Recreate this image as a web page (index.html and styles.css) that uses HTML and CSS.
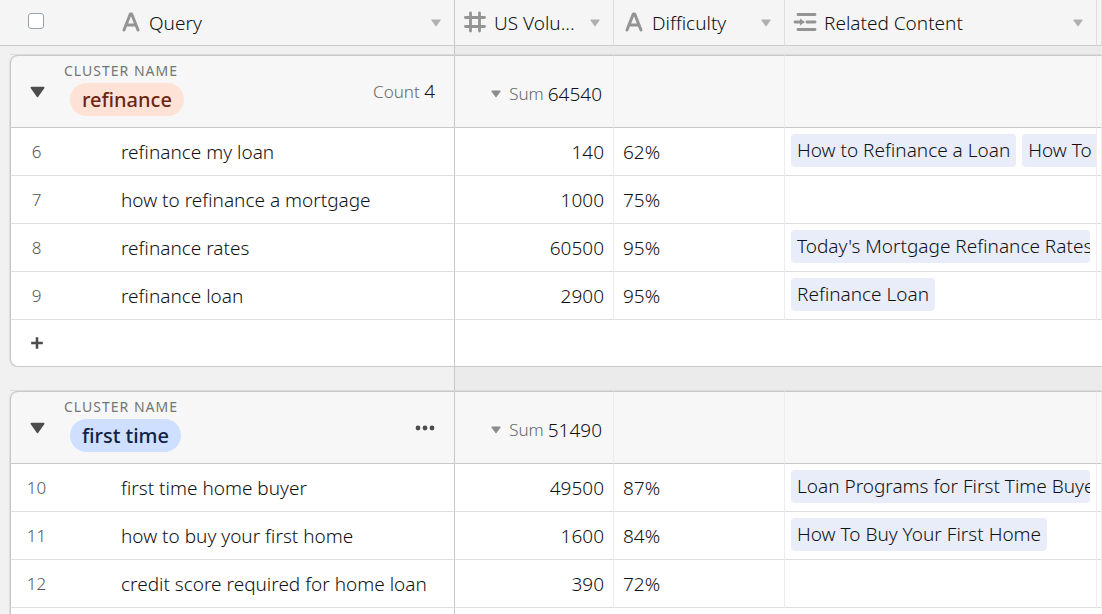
FILE: index.html
```
<!DOCTYPE html>
<html lang="en">
<head>
    <meta charset="UTF-8">
    <meta name="viewport" content="width=device-width, initial-scale=1.0">
    <title>Keyword Clusters</title>
    <link rel="stylesheet" href="styles.css">
</head>
<body>
    <!-- shared icons -->
    <svg class="defs" width="0" height="0" aria-hidden="true">
        <symbol id="caret" viewBox="0 0 10 8">
            <path d="M1 .5h8a.6.6 0 0 1 .5 1L5.5 7.100a.6.6 0 0 1-1 0L.5 1.500A.6.6 0 0 1 1 .5z" fill="currentColor"/>
        </symbol>
        <symbol id="text-field" viewBox="0 0 18 20">
            <path d="M2 18 8.300 2h1.400L16 18M4.500 13h9" fill="none" stroke="currentColor" stroke-width="3" stroke-linecap="round" stroke-linejoin="round"/>
        </symbol>
        <symbol id="number-field" viewBox="0 0 22 22">
            <path d="M1.500 6.500h19M1.500 15.500h19M6.500 2v18M15.500 2v18" fill="none" stroke="currentColor" stroke-width="2.800" stroke-linecap="round"/>
        </symbol>
        <symbol id="link-field" viewBox="0 0 24 20">
            <path d="M5 2.500h17M14 10h8M5 17.500h17M2 10h6" fill="none" stroke="currentColor" stroke-width="2.800" stroke-linecap="round"/>
            <path d="M7 6.500 12 10l-5 3.500z" fill="currentColor"/>
        </symbol>
    </svg>

    <div class="grid-view">
        <table class="grid">
            <colgroup>
                <col class="col-gutter">
                <col class="col-num">
                <col class="col-query">
                <col class="col-volume">
                <col class="col-difficulty">
                <col class="col-related">
                <col class="col-next">
            </colgroup>
            <thead>
                <tr>
                    <th colspan="2" class="select-all"><input type="checkbox" aria-label="Select all rows"></th>
                    <th class="frozen">
                        <div class="field field-query">
                            <svg class="icon-text"><use href="#text-field"/></svg>
                            <span class="field-name">Query</span>
                            <button class="menu" aria-label="Query menu"><svg><use href="#caret"/></svg></button>
                        </div>
                    </th>
                    <th>
                        <div class="field">
                            <svg class="icon-number"><use href="#number-field"/></svg>
                            <span class="field-name">US Volu...</span>
                            <button class="menu" aria-label="US Volume menu"><svg><use href="#caret"/></svg></button>
                        </div>
                    </th>
                    <th>
                        <div class="field field-difficulty">
                            <svg class="icon-text"><use href="#text-field"/></svg>
                            <span class="field-name">Difficulty</span>
                            <button class="menu" aria-label="Difficulty menu"><svg><use href="#caret"/></svg></button>
                        </div>
                    </th>
                    <th>
                        <div class="field field-related">
                            <svg class="icon-link"><use href="#link-field"/></svg>
                            <span class="field-name">Related Content</span>
                            <button class="menu" aria-label="Related Content menu"><svg><use href="#caret"/></svg></button>
                        </div>
                    </th>
                    <th></th>
                </tr>
            </thead>

            <tbody>
                <tr class="gap gap-top"><td class="gutter"></td><td colspan="2" class="frozen"></td><td colspan="4" class="gap-main"></td></tr>
                <tr class="group">
                    <td class="gutter"></td>
                    <td colspan="2" class="first frozen">
                        <div class="group-head">
                            <button class="toggle" aria-label="Collapse refinance"><svg><use href="#caret"/></svg></button>
                            <div class="group-title">
                                <span class="group-label">CLUSTER NAME</span>
                                <span class="pill pill-red">refinance</span>
                            </div>
                            <span class="count">Count <b>4</b></span>
                        </div>
                    </td>
                    <td>
                        <button class="summary"><svg><use href="#caret"/></svg>Sum <b>64540</b></button>
                    </td>
                    <td></td>
                    <td></td>
                    <td></td>
                </tr>
                <tr class="row">
                    <td class="gutter"></td>
                    <td class="first num">6</td>
                    <td class="query frozen">refinance my loan</td>
                    <td class="volume">140</td>
                    <td class="difficulty">62%</td>
                    <td><div class="links"><span class="link">How to Refinance a Loan</span><span class="link cut">How To</span></div></td>
                    <td></td>
                </tr>
                <tr class="row">
                    <td class="gutter"></td>
                    <td class="first num">7</td>
                    <td class="query frozen">how to refinance a mortgage</td>
                    <td class="volume">1000</td>
                    <td class="difficulty">75%</td>
                    <td></td>
                    <td></td>
                </tr>
                <tr class="row">
                    <td class="gutter"></td>
                    <td class="first num">8</td>
                    <td class="query frozen">refinance rates</td>
                    <td class="volume">60500</td>
                    <td class="difficulty">95%</td>
                    <td><div class="links"><span class="link">Today's Mortgage Refinance Rates</span></div></td>
                    <td></td>
                </tr>
                <tr class="row">
                    <td class="gutter"></td>
                    <td class="first num">9</td>
                    <td class="query frozen">refinance loan</td>
                    <td class="volume">2900</td>
                    <td class="difficulty">95%</td>
                    <td><div class="links"><span class="link">Refinance Loan</span></div></td>
                    <td></td>
                </tr>
                <tr class="add-row">
                    <td class="gutter"></td>
                    <td class="first"><button class="add" aria-label="Add row"><svg viewBox="0 0 12 12"><path d="M6 1v10M1 6h10" stroke="currentColor" stroke-width="2.200"/></svg></button></td>
                    <td class="frozen"></td>
                    <td colspan="4"></td>
                </tr>
            </tbody>

            <tbody>
                <tr class="gap"><td class="gutter"></td><td colspan="2" class="frozen"></td><td colspan="4" class="gap-main"></td></tr>
                <tr class="group">
                    <td class="gutter"></td>
                    <td colspan="2" class="first frozen">
                        <div class="group-head">
                            <button class="toggle" aria-label="Collapse first time"><svg><use href="#caret"/></svg></button>
                            <div class="group-title">
                                <span class="group-label">CLUSTER NAME</span>
                                <span class="pill pill-blue">first time</span>
                            </div>
                            <button class="more" aria-label="Group options"><svg viewBox="0 0 20 6"><circle cx="3" cy="3" r="2.400"/><circle cx="10" cy="3" r="2.400"/><circle cx="17" cy="3" r="2.400"/></svg></button>
                        </div>
                    </td>
                    <td>
                        <button class="summary"><svg><use href="#caret"/></svg>Sum <b>51490</b></button>
                    </td>
                    <td></td>
                    <td></td>
                    <td></td>
                </tr>
                <tr class="row">
                    <td class="gutter"></td>
                    <td class="first num">10</td>
                    <td class="query frozen">first time home buyer</td>
                    <td class="volume">49500</td>
                    <td class="difficulty">87%</td>
                    <td><div class="links"><span class="link">Loan Programs for First Time Buyers</span></div></td>
                    <td></td>
                </tr>
                <tr class="row">
                    <td class="gutter"></td>
                    <td class="first num">11</td>
                    <td class="query frozen">how to buy your first home</td>
                    <td class="volume">1600</td>
                    <td class="difficulty">84%</td>
                    <td><div class="links"><span class="link">How To Buy Your First Home</span></div></td>
                    <td></td>
                </tr>
                <tr class="row">
                    <td class="gutter"></td>
                    <td class="first num">12</td>
                    <td class="query frozen">credit score required for home loan</td>
                    <td class="volume">390</td>
                    <td class="difficulty">72%</td>
                    <td></td>
                    <td></td>
                </tr>
                <tr class="add-row">
                    <td class="gutter"></td>
                    <td class="first"></td>
                    <td class="frozen"></td>
                    <td colspan="4"></td>
                </tr>
            </tbody>
        </table>
    </div>
</body>
</html>
```
FILE: styles.css
```
* {
    margin: 0;
    padding: 0;
    box-sizing: border-box;
}

body {
    font-family: "Noto Sans", "Open Sans", sans-serif;
    font-size: 19px;
    font-weight: 300;
    line-height: 24px;
    color: #111;
    background-color: #f1f1f1;
}

.defs {
    display: block;
}

button {
    display: flex;
    align-items: center;
    font: inherit;
    color: inherit;
    background: none;
    border: none;
    cursor: pointer;
}

b {
    font-weight: inherit;
}

.grid-view {
    height: 100vh;
    overflow: hidden;
}

.grid {
    width: 100%;
    table-layout: fixed;
    border-collapse: separate;
    border-spacing: 0;
}

.col-gutter { width: 10px; }
.col-num { width: 52px; }
.col-query { width: 393px; }
.col-volume { width: 159px; }
.col-difficulty { width: 171px; }
.col-next { width: 5px; }

/* field headers */
th {
    height: 46px;
    font-weight: inherit;
    text-align: left;
    background-color: #f5f5f5;
    border-right: 1px solid #dedede;
    border-bottom: 1px solid #ccc;
}

.select-all {
    padding-left: 28px;
    border-right: none;
}

.select-all input {
    display: block;
    appearance: none;
    width: 16px;
    height: 16px;
    margin-bottom: 4px;
    background-color: #fff;
    border: 1px solid #98a2ad;
    border-radius: 3px;
}

.field {
    display: flex;
    align-items: center;
    padding: 0 13px 0 9px;
}

.field-query {
    padding-left: 60px;
}

.field-difficulty {
    padding-left: 11px;
}

.field-related {
    padding-left: 8px;
}

.field-name {
    flex: 1;
    white-space: nowrap;
}

.field svg {
    flex: none;
    display: block;
    color: #949494;
}

.field .icon-text {
    width: 18px;
    height: 20px;
    margin: 0 9px 2px 0;
}

.field .icon-number {
    width: 22px;
    height: 22px;
    margin: 0 8px 2px 0;
}

.field .icon-link {
    width: 24px;
    height: 20px;
    margin: 0 7px 2px 0;
}

.menu svg {
    width: 10px;
    height: 8px;
    color: #b0b0b0;
}

/* cells */
td {
    white-space: nowrap;
    background-color: #fff;
    border-right: 1px solid #ededed;
}

th.frozen,
td.frozen {
    border-right-color: #c8c8c8;
}

td.gutter {
    background-color: #f1f1f1;
    border: none;
}

td.first {
    border-left: 1px solid #c8c8c8;
    box-shadow: -1px 0 0 #dedede;
}

.gap td {
    height: 24px;
    background-color: #f1f1f1;
    border-bottom: 1px solid #dcdcdc;
}

.gap td.gap-main {
    background-color: #ebebeb;
}

.gap-top td {
    height: 9px;
}

.gap td.gutter {
    border: none;
}

/* cluster header */
.group td {
    height: 73px;
    background-color: #f7f7f7;
    border-top: 1px solid #c8c8c8;
    border-bottom: 1px solid #c8c8c8;
}

.group td.gutter {
    background-color: #f1f1f1;
    border: none;
}

.group td.first {
    border-top-left-radius: 8px;
}

.group-head {
    display: flex;
    align-items: center;
    padding: 0 19px 0 18px;
}

.toggle {
    width: 35px;
}

.toggle svg {
    width: 17px;
    height: 12px;
    color: #4d4d4d;
}

.group-title {
    flex: 1;
    display: flex;
    flex-direction: column;
    align-items: flex-start;
    padding-bottom: 5px;
}

.group-label {
    font-size: 14px;
    font-weight: 400;
    line-height: 18px;
    letter-spacing: 1px;
    color: #757575;
    margin-bottom: 3px;
}

.pill {
    height: 33px;
    margin-left: 6px;
    padding: 0 12px;
    border-radius: 17px;
    line-height: 33px;
    font-weight: 500;
    font-size: 20px;
}

.pill-red {
    color: #6b2613;
    background-color: #fee2d5;
}

.pill-blue {
    color: #102046;
    background-color: #cfdfff;
}

.count,
.summary {
    font-size: 17px;
    color: #666;
}

.count b,
.summary b {
    font-size: 19px;
    color: #111;
}

.summary {
    gap: 4px;
    margin-left: auto;
    padding: 4px 11px 0 0;
}

.summary svg {
    width: 10px;
    height: 8px;
    margin-right: 4px;
    color: #8c8c8c;
}

.more svg {
    width: 20px;
    height: 6px;
    fill: #4d4d4d;
}

/* records */
.row td {
    height: 48px;
    border-bottom: 1px solid #dedede;
}

.row td.gutter {
    border: none;
}

td.num {
    border-right: none;
    font-size: 17px;
    text-align: center;
    color: #555;
}

td.query {
    padding-left: 59px;
}

td.volume {
    padding-right: 9px;
    text-align: right;
}

td.difficulty {
    padding-left: 9px;
}

.links {
    display: flex;
    gap: 6px;
    padding: 0 0 2px 6px;
    overflow: hidden;
}

.link {
    max-width: 299px;
    height: 33px;
    padding: 0 6px;
    line-height: 33px;
    border-radius: 4px;
    background-color: #e9edf9;
    overflow: hidden;
}

.link.cut {
    flex: 1;
    border-top-right-radius: 0;
    border-bottom-right-radius: 0;
}

/* add record */
.add-row td {
    height: 47px;
    border-right: none;
    border-bottom: 1px solid #c8c8c8;
}

.add-row td.frozen {
    border-right: 1px solid #c8c8c8;
}

.add-row td.gutter {
    border: none;
}

.add-row td.first {
    border-bottom-left-radius: 8px;
}

.add {
    margin-left: 19px;
    color: #4d4d4d;
}

.add svg {
    width: 14px;
    height: 14px;
}
```
